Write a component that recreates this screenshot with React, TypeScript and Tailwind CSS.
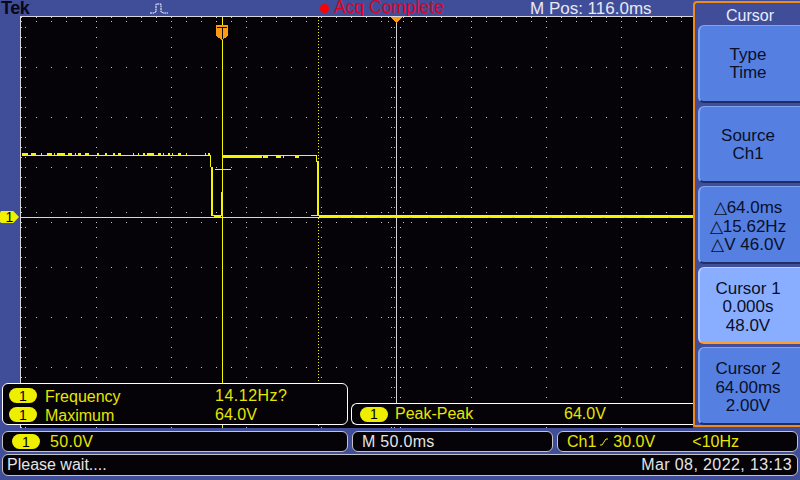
import React from "react"

const YELLOW = "#f5f500"

// graticule dots, coordinates are page pixels
const Graticule = () => {
  const dots: React.ReactElement[] = []
  const majorX = [96, 171, 246, 321, 471, 546, 621]
  const majorY = [67, 117, 167, 217, 267, 317, 367]
  majorX.forEach((x) => {
    for (let y = 27; y < 428; y += 10) {
      dots.push(<rect key={`v${x}-${y}`} x={x} y={y} width="1" height="1" />)
    }
  })
  ;[17, 21, 212, 222, ...majorY, 413, 417].forEach((y) => {
    for (let x = 21; x < 693; x += 15) {
      dots.push(<rect key={`h${x}-${y}`} x={x} y={y} width="1" height="1" />)
    }
    ;[388, 403].forEach((x) => dots.push(<rect key={`m${x}-${y}`} x={x} y={y} width="1" height="1" />))
  })
  for (let y = 27; y < 428; y += 10) {
    dots.push(<rect key={`c1-${y}`} x={21} y={y} width="1" height="1" />)
    dots.push(<rect key={`c5-${y}`} x={25} y={y} width="1" height="1" />)
    dots.push(<rect key={`c2-${y}`} x={391} y={y} width="1" height="1" />)
    dots.push(<rect key={`c3-${y}`} x={394} y={y} width="1" height="1" />)
    dots.push(<rect key={`c4-${y}`} x={400} y={y} width="1" height="1" />)
  }
  return <g fill="#c8c8c8">{dots}</g>
}

// [x, width] of the noise spikes on the trace
const noiseLeft = [
  [22, 6], [31, 5], [41, 1], [47, 5], [54, 1], [57, 8], [68, 4], [75, 1], [78, 3], [85, 4],
  [97, 2], [105, 2], [113, 2], [118, 3], [133, 1], [138, 1], [143, 2], [147, 7], [158, 3],
  [163, 1], [168, 2], [172, 1], [178, 3], [186, 1], [205, 1], [208, 2],
]
const noiseRight = [[263, 5], [276, 5], [283, 1], [295, 4]]
const noiseFlat = [338, 351, 364, 377, 392, 409, 428, 447, 461, 488, 512, 530, 549, 566, 583, 602, 624, 641, 668]

const Scope = () => (
  <svg className="absolute left-0 top-[16px]" width="693" height="412" viewBox="0 16 693 412" shapeRendering="crispEdges">
    <Graticule />
    <rect x="20" y="16" width="673" height="1" fill="#d8d8d8" />
    <rect x="20" y="16" width="1" height="412" fill="#d8d8d8" />
    <rect x="21" y="217" width="672" height="1" fill="#d8d8d8" />
    <rect x="396" y="23" width="1" height="381" fill="#d0d0d0" />
    <line x1="318.5" y1="17" x2="318.5" y2="428" stroke={YELLOW} strokeDasharray="1 2" />
    <rect x="222" y="17" width="1" height="411" fill={YELLOW} />
    <rect x="215" y="169" width="16" height="1" fill={YELLOW} />
    {/* Waveform */}
    <g fill={YELLOW}>
      <rect x="22" y="155" width="189" height="1" />
      <rect x="210" y="155" width="1" height="12" />
      <rect x="211" y="167" width="2" height="49" />
      <rect x="211" y="215" width="11" height="1" />
      <rect x="214" y="216" width="7" height="1" />
      <rect x="221" y="192" width="1" height="24" />
      <rect x="223" y="155" width="93" height="1" />
      <rect x="223" y="156" width="39" height="2" />
      <rect x="316" y="155" width="1" height="7" />
      <rect x="317" y="161" width="2" height="55" />
      <rect x="311" y="215" width="8" height="1" />
      <rect x="319" y="215" width="374" height="3" />
      {noiseLeft.map(([x, w]) => (
        <rect key={x} x={x} y="153" width={w} height="2" />
      ))}
      {noiseRight.map(([x, w]) => (
        <rect key={x} x={x} y="156" width={w} height="2" />
      ))}
    </g>
    {noiseFlat.map((x) => (
      <rect key={x} x={x} y="217" width="3" height="1" fill="#c8c8a0" />
    ))}
    {/* Trigger position */}
    <path d="M216 25H228V36L222 40L216 36Z" fill="#ff9a14" />
    <path d="M217 27.5H227M222 27.5V39" stroke="#120a00" strokeWidth="1" fill="none" />
    <path d="M390.5 17H402.5L396.5 23.5Z" fill="#ff9a14" />
  </svg>
)

const Pill = ({ className = "w-[28px]" }: { className?: string }) => (
  <span className={`flex h-[15px] items-center justify-center rounded-full bg-[#eeee00] text-[14px] leading-none text-black ${className}`}>
    1
  </span>
)

const MenuButton = ({ lines, active }: { lines: string[]; active?: boolean }) => (
  <div
    className={
      (active
        ? "border-[#ff9d2e] border-t-[#b9cdff] border-l-[#b9cdff] bg-[#8aaeff] "
        : "border-b-[#1d2f66] border-l-[#7fa5f2] border-t-[#7fa5f2] bg-[#5580e2] ") +
      (lines.length === 3 ? "pt-[5px] leading-[18.5px] " : "pt-[2px] leading-[18px] ") +
      "flex h-[78px] flex-col items-center justify-center rounded-l-[6px] border-b-2 border-l-2 border-t pr-[4px] text-[17px] text-[#0a0f28]"
    }
  >
    {lines.map((line) => (
      <span key={line}>{line}</span>
    ))}
  </div>
)

const App = () => {
  return (
    <div className="flex h-[480px] w-[800px] flex-col overflow-hidden bg-[#404e99] font-['Liberation_Sans',sans-serif] text-[16px]">
      <div className="flex h-[428px]">
        <div className="relative w-[693px]">
          <header className="flex h-[16px] items-center">
            <span className="ml-[1px] w-[149px] text-[18px] font-bold leading-none tracking-[-0.5px] text-[#08081a]">Tek</span>
            <svg className="w-[19px]" width="19" height="12" viewBox="0 0 19 12">
              <path d="M0 11H4L5 10H6V2H11V10H12L13 11H18" fill="none" stroke="#fff" strokeWidth="1" strokeDasharray="2 0.6" />
            </svg>
            <span className="ml-[151px] h-[9px] w-[9px] rounded-full bg-[#ff0000]" />
            <span className="ml-[5px] w-[196px] text-[17.5px] leading-none text-[#e0001c]">Acq Complete</span>
            <span className="text-[17px] leading-none text-[#e8e8f4]">M Pos: 116.0ms</span>
          </header>
          <div className="ml-[20px] h-[412px] bg-[#050208]" />
          <Scope />
          {/* Channel 1 ground marker */}
          <div className="absolute left-0 top-[211px] flex h-[12px] w-[19px] items-center justify-center bg-[#f0f000] text-[14px] leading-none text-black [clip-path:polygon(0_15%,5%_0,70%_0,100%_50%,70%_100%,5%_100%,0_85%)]">
            1
          </div>
          {/* Measurements */}
          <div className="absolute left-[2px] top-[383px] flex h-[42px] w-[346px] flex-col rounded-[6px] border border-white bg-[#050208] pl-[6px] pt-[2px] text-[#e6e600]">
            <div className="flex h-[19px] items-center">
              <Pill />
              <span className="ml-[8px] w-[170px] pt-[2px]">Frequency</span>
              <span className="tracking-[0.5px]">14.12Hz?</span>
            </div>
            <div className="flex h-[19px] items-center">
              <Pill />
              <span className="ml-[8px] w-[170px] pt-[2px]">Maximum</span>
              <span>64.0V</span>
            </div>
          </div>
          <div className="absolute left-[351px] top-[403px] flex h-[22px] w-[342px] items-center rounded-l-[6px] border-y border-l border-white bg-[#050208] pl-[8px] text-[#e6e600]">
            <Pill />
            <span className="ml-[7px] w-[169px]">Peak-Peak</span>
            <span>64.0V</span>
          </div>
        </div>
        <aside className="mt-[1px] flex h-[426px] w-[107px] flex-col gap-[3px] rounded-tl-[4px] rounded-bl-[2px] border-y-2 border-l-2 border-[#f08a1d] pl-[3px]">
          <div className="flex h-[19px] items-center justify-center pl-[2px] pt-[6px] text-[16px] leading-none text-[#e8ecff]">Cursor</div>
          <MenuButton lines={["Type", "Time"]} />
          <MenuButton lines={["Source", "Ch1"]} />
          <MenuButton lines={["△64.0ms", "△15.62Hz", "△V 46.0V"]} />
          <MenuButton lines={["Cursor 1", "0.000s", "48.0V"]} active />
          <MenuButton lines={["Cursor 2", "64.00ms", "2.00V"]} />
        </aside>
      </div>

      <div className="mx-[2px] mt-[3px] flex h-[21px] gap-[4px]">
        <div className="flex w-[346px] items-center rounded-[6px] border border-[#c4c4c4] bg-[#050208] pl-[9px] text-[#e6e600]">
          <Pill />
          <span className="ml-[10px] tracking-[0.3px]">50.0V</span>
        </div>
        <div className="flex w-[201px] items-center rounded-[6px] border border-[#c4c4c4] bg-[#050208] pl-[9px] tracking-[0.3px] text-[#e4e4e4]">M 50.0ms</div>
        <div className="flex w-[241px] items-center rounded-[6px] border border-[#c4c4c4] bg-[#050208] pl-[9px] text-[#e6e600]">
          <span>Ch1</span>
          <svg className="ml-[4px] mr-[4px]" width="9" height="10" viewBox="0 0 9 10">
            <path d="M0 8H2L6 2H8" fill="none" stroke="#e6e600" strokeWidth="1" />
          </svg>
          <span className="w-[79px]">30.0V</span>
          <span>&lt;10Hz</span>
        </div>
      </div>
      <div className="mx-[2px] mt-[2px] flex h-[22px] items-center justify-between rounded-[6px] border border-[#c4c4c4] bg-[#050208] pl-[4px] pr-[5px] text-[#e4e4e4]">
        <span>Please wait....</span>
        <span className="tracking-[0.4px]">Mar 08, 2022, 13:13</span>
      </div>
    </div>
  )
}

export default App
